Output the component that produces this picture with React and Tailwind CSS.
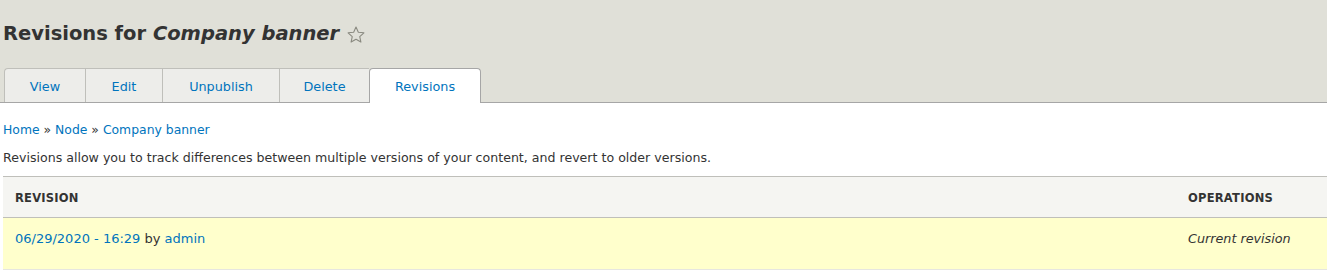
export default function App() {
  const font = { fontFamily: '"DejaVu Sans", Verdana, sans-serif' };
  const tabs = [
    { label: "View", w: "w-[81px]" },
    { label: "Edit", w: "w-[77px]" },
    { label: "Unpublish", w: "w-[117px]" },
    { label: "Delete", w: "w-[90px]" },
  ];
  return (
    <div className="w-[1327px] h-[279px] bg-white text-[#333]" style={font}>
      <div className="bg-[#e0e0d8] border-b border-[#a6a6a6] h-[103px] flex flex-col">
        <h1 className="pt-[20px] pl-[3px] text-[19.5px] leading-[28px] font-bold text-[#333] flex items-center">
          <span>Revisions for&nbsp;</span>
          <em className="italic">Company banner</em>
          <svg className="ml-[7px] mt-[1px]" width="20" height="20" viewBox="0 0 24 24" fill="none" stroke="#8a8a80" strokeWidth="1.3" strokeLinejoin="round">
            <path d="M12 2.5l2.8 6.2 6.7.7-5 4.5 1.4 6.6L12 17.1l-5.9 3.4 1.4-6.6-5-4.5 6.7-.7z" />
          </svg>
        </h1>
        <div className="mt-auto flex pl-[4px] text-[12.8px] leading-[16px] h-[34px]">
          {tabs.map((t, i) => (
            <div
              key={t.label}
              className={`${t.w} h-[34px] pt-[2px] flex items-center justify-center bg-[#ededea] border-t border-l border-[#bfbfba] text-[#0074bd] ${i === 0 ? "rounded-tl-[4px]" : ""}`}
            >
              {t.label}
            </div>
          ))}
          <div className="w-[112px] h-[35px] -mb-px pt-[1px] flex items-center justify-center bg-white border-t border-l border-r border-[#a6a6a6] rounded-t-[4px] text-[#0074bd] relative">
            Revisions
          </div>
        </div>
      </div>
      <div className="pl-[3px]">
        <div className="pt-[19px] h-[46px] leading-[16px] text-[12.4px] text-[#0074bd]">
          Home <span className="text-[#333]">»</span> Node <span className="text-[#333]">»</span> Company banner
        </div>
        <div className="pt-[1px] leading-[16px] text-[12.6px] text-[#333]">
          Revisions allow you to track differences between multiple versions of your content, and revert to older versions.
        </div>
        <div className="mt-[10px] border-t border-[#bfbfba]">
          <div className="h-[41px] pt-[3px] bg-[#f5f5f2] border-b border-[#bfbfba] flex items-center text-[11.5px] tracking-[0.02em] font-bold uppercase text-[#333]">
            <div className="pl-[12px] flex-1">Revision</div>
            <div className="w-[151px] pl-[12px]">Operations</div>
          </div>
          <div className="h-[52px] bg-[#ffffcc] border-b border-[#e6e6e0] flex items-start pt-[13px] text-[13px] leading-[16px]">
            <div className="pl-[12px] flex-1">
              <span className="text-[#0074bd]">06/29/2020 - 16:29</span> by <span className="text-[#0074bd]">admin</span>
            </div>
            <div className="w-[151px] pl-[12px] italic text-[12.75px]">Current revision</div>
          </div>
        </div>
      </div>
    </div>
  );
}
